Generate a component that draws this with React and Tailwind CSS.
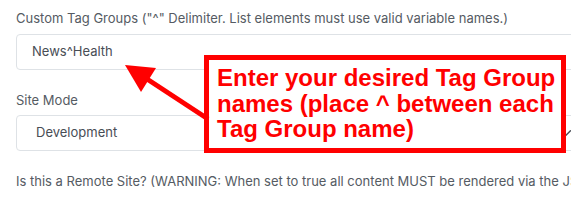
import React from "react";

const ChevronDown = () => (
  <svg width="12" height="12" viewBox="0 0 16 16" fill="none" stroke="#4b5058" strokeWidth="2" strokeLinecap="round" strokeLinejoin="round">
    <path d="M2 5l6 6 6-6" />
  </svg>
);

const App = () => {
  return (
    <div className="relative w-[571px] h-[206px] overflow-hidden bg-white font-['Inter',sans-serif] text-[13px] text-[#555b63]">
      <div className="pl-4 pt-2 w-[600px]">
        {/* Tag groups */}
        <label className="block leading-5 mb-1.5 whitespace-nowrap">
          Custom Tag Groups ("^" Delimiter. List elements must use valid variable names.)
        </label>
        <div className="h-9 w-[574px] rounded border border-[#dee2e6] flex items-center px-[15px] text-[#484d55]">
          News^Health
        </div>

        {/* Site mode */}
        <label className="block leading-5 mt-5 mb-[5px]">Site Mode</label>
        <div className="h-9 w-[574px] rounded border border-[#dee2e6] flex items-center justify-between pl-[19px] pr-[17px] text-[#484d55]">
          <span>Development</span>
          <ChevronDown />
        </div>

        <p className="leading-5 mt-5 whitespace-nowrap">
          Is this a Remote Site? (WARNING: When set to true all content MUST be rendered via the JSON API.)
        </p>
      </div>

      {/* Annotation */}
      <div className="absolute left-[204px] top-[55px] w-[362px] h-[98px] border-[5px] border-[#ff0000] bg-white pl-2 pt-[5px]">
        <p className="font-['Liberation_Sans',Arial,sans-serif] font-bold text-[24px] leading-[25.5px] text-[#ff0000] whitespace-nowrap">
          Enter your desired Tag Group
          <br />
          names (place ^ between each
          <br />
          Tag Group name)
        </p>
      </div>
      <svg className="absolute left-0 top-0" width="571" height="206" viewBox="0 0 571 206">
        <line x1="208" y1="119" x2="147" y2="79" stroke="#ff0000" strokeWidth="5" />
        <polygon points="125,65 156,68 141,92" fill="#ff0000" />
      </svg>
    </div>
  );
};

export default App;
